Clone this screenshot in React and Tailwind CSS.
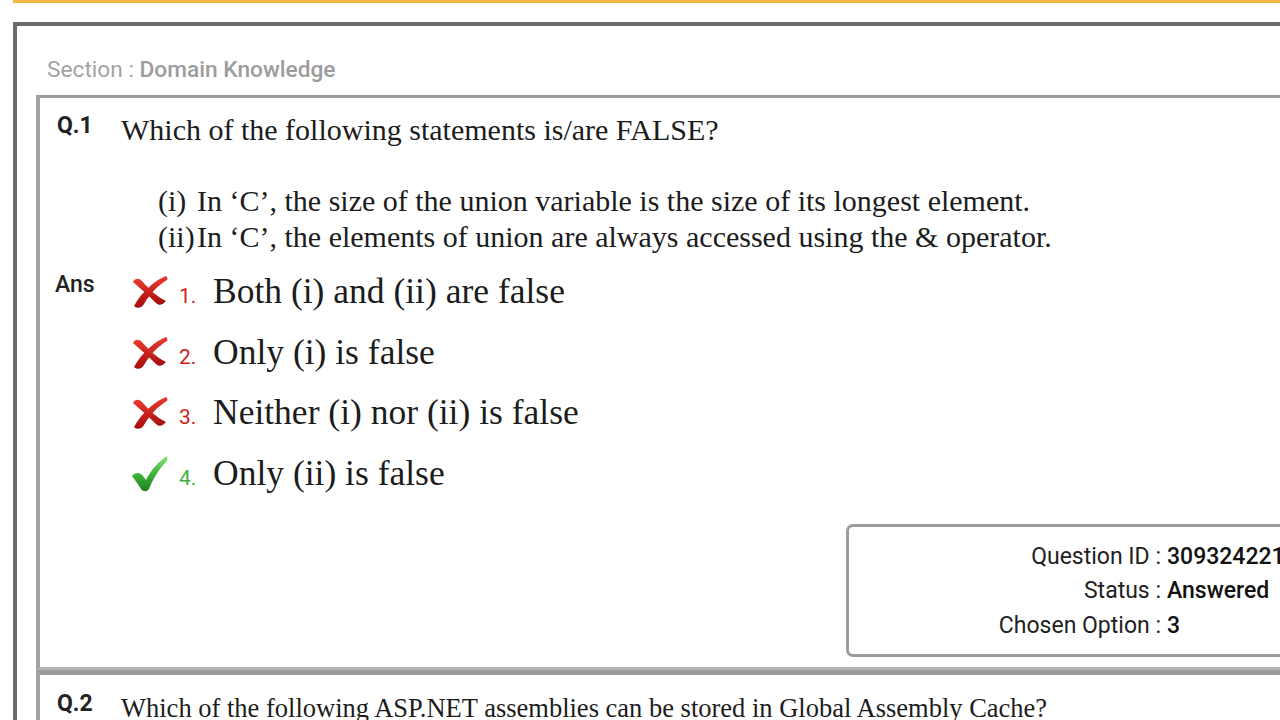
import React from "react";

function RedCross() {
  return (
    <svg width="37" height="34" viewBox="0 0 37 34" className="shrink-0">
      <defs>
        <linearGradient id="rx" x1="0" y1="0" x2="0" y2="1">
          <stop offset="0" stopColor="#ea3b30" />
          <stop offset="1" stopColor="#a50c0c" />
        </linearGradient>
      </defs>
      <path d="M35 1 C25 5 15 13 6 26 L3 31 C6 34 11 33 13 29 C19 19 26 11 36 5 C37 3 36 2 35 1 Z" fill="url(#rx)" />
      <path d="M2 7 C4 3 8 3 11 6 C18 14 25 21 35 26 C32 30 28 31 25 28 C18 21 10 14 2 7 Z" fill="url(#rx)" />
    </svg>
  );
}

function GreenCheck() {
  return (
    <svg width="38" height="38" viewBox="0 0 38 38" className="shrink-0">
      <defs>
        <linearGradient id="gc" x1="0" y1="0" x2="0" y2="1">
          <stop offset="0" stopColor="#8be07a" />
          <stop offset="0.5" stopColor="#3fb53a" />
          <stop offset="1" stopColor="#1c7f22" />
        </linearGradient>
      </defs>
      <path d="M1 21 C4 17 9 17 12 21 L15 25 C20 15 27 7 36 1 C37 4 36 6 35 7 C28 14 22 24 18 34 C16 37 12 37 10 34 C7 29 4 25 1 21 Z" fill="url(#gc)" />
    </svg>
  );
}

const options = [
  { n: "1.", text: "Both (i) and (ii) are false", ok: false },
  { n: "2.", text: "Only (i) is false", ok: false },
  { n: "3.", text: "Neither (i) nor (ii) is false", ok: false },
  { n: "4.", text: "Only (ii) is false", ok: true },
];

const serif = "font-['Liberation_Serif','Times_New_Roman',serif]";
const roboto = "font-['Roboto','Liberation_Sans',sans-serif]";

export default function App() {
  return (
    <div className="w-[1280px] h-[720px] overflow-hidden bg-white">
      <div className="ml-[13px] h-[3px] w-[1400px] bg-[#f6b646]" />
      <div className="ml-[13px] mt-[19px] w-[1400px] border-l-4 border-t-4 border-[#6b6b6b] pt-[30px]">
        <div className={`${roboto} pl-[30px] text-[22.7px] leading-[28px] text-[#a3a3a3]`}>
          Section : <span className="font-medium text-[#9c9c9c]">Domain Knowledge</span>
        </div>

        <div className="ml-[19px] mt-[11px] w-[1340px] border-l-4 border-t-[3px] border-b-[3px] border-l-[#a3a3a3] border-t-[#9c9c9c] border-b-[#b3b3b3] pt-[14px] pb-[10px]">
          <div className="flex">
            <div className={`${roboto} w-[81px] shrink-0 pl-[17px] pt-[2px] text-[23px] font-bold leading-[24px] text-[#222]`}>Q.1</div>
            <div className={`${serif} text-[30px] leading-[36px] text-[#1c1c1c]`}>
              <div>Which of the following statements is/are FALSE?</div>
              <div className="mt-[35px] pl-[37px]">
                <div><span className="inline-block w-[39px]">(i)</span>In ‘C’, the size of the union variable is the size of its longest element.</div>
                <div><span className="inline-block w-[39px]">(ii)</span>In ‘C’, the elements of union are always accessed using the &amp; operator.</div>
              </div>
            </div>
          </div>

          <div className="mt-[17px] flex">
            <div className={`${roboto} w-[81px] shrink-0 pl-[15px] pt-[1px] text-[23px] font-medium leading-[24px] text-[#222]`}>Ans</div>
            <div className="flex flex-col gap-[20.5px]">
              {options.map((o) => (
                <div key={o.n} className="flex h-[40px] items-center">
                  <div className="ml-[10px] flex w-[40px] items-center">
                    {o.ok ? <GreenCheck /> : <RedCross />}
                  </div>
                  <div className="ml-[8px] flex items-baseline">
                    <span className={`${roboto} w-[34px] text-[21px] ${o.ok ? "text-[#3fb03f]" : "text-[#cf1f1a]"}`}>{o.n}</span>
                    <span className={`${serif} text-[35.5px] leading-[40px] text-[#1c1c1c]`}>{o.text}</span>
                  </div>
                </div>
              ))}
            </div>
          </div>

          <div className="ml-[806px] mt-[30px] w-[520px] rounded-[7px] border-[3px] border-[#9c9c9c] pt-[13px] pb-[11px]">
            <div className={`${roboto} grid grid-cols-[312px_1fr] text-[23px] leading-[34.5px] text-[#222]`}>
              <div className="text-right">Question ID :</div>
              <div className="pl-[6px] font-medium text-[#111]">309324221</div>
              <div className="text-right">Status :</div>
              <div className="pl-[6px] font-medium text-[#111]">Answered</div>
              <div className="text-right">Chosen Option :</div>
              <div className="pl-[6px] font-medium text-[#111]">3</div>
            </div>
          </div>
        </div>

        <div className="ml-[19px] w-[1340px] border-l-4 border-t-[5px] border-l-[#a3a3a3] border-t-[#9c9c9c] pt-[15px]">
          <div className="flex">
            <div className={`${roboto} w-[81px] shrink-0 pl-[17px] pt-[2px] text-[23px] font-bold leading-[24px] text-[#222]`}>Q.2</div>
            <div className={`${serif} text-[26.5px] leading-[36px] text-[#1c1c1c]`}>
              Which of the following ASP.NET assemblies can be stored in Global Assembly Cache?
            </div>
          </div>
        </div>
      </div>
    </div>
  );
}
